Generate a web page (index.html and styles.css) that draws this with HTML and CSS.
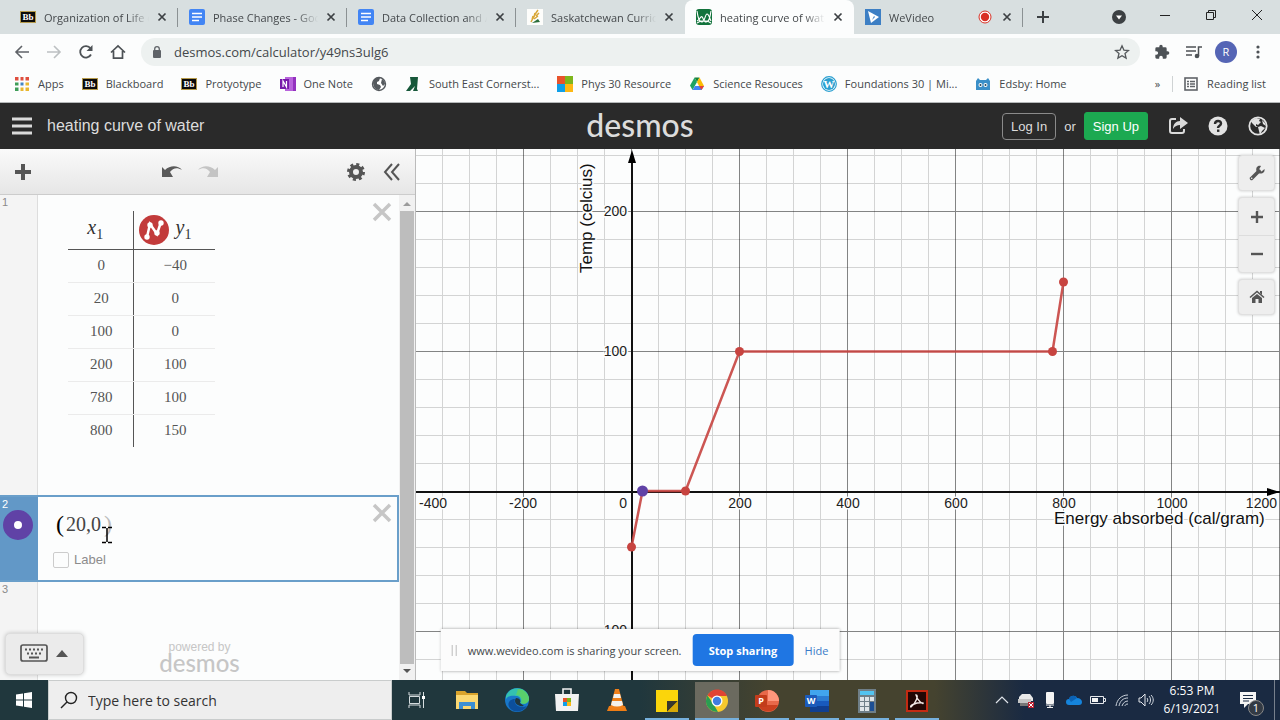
FILE: index.html
```html
<!DOCTYPE html>
<html lang="en">

<head>
    <meta charset="UTF-8">
    <meta name="viewport" content="width=device-width, initial-scale=1.0">
    <title>heating curve of water</title>
    <link rel="stylesheet" href="styles.css">
</head>

<body>
    <!-- shared icons -->
    <svg class="defs" width="0" height="0" aria-hidden="true">
        <symbol id="bb" viewBox="0 0 16 16">
            <rect x="0" y="2" width="16" height="12" fill="#b59a4a"/>
            <rect x="1" y="3" width="14" height="10" fill="#0b0b0b"/>
            <text x="8" y="11" text-anchor="middle" font-family="Liberation Serif, serif" font-size="9" font-weight="bold" fill="#fff">Bb</text>
        </symbol>
        <symbol id="docs" viewBox="0 0 16 16">
            <rect width="16" height="16" rx="2" fill="#4285f4"/>
            <path d="M3 4.500h10M3 8h10M3 11.500h7" stroke="#fff" stroke-width="1.500"/>
        </symbol>
        <symbol id="close" viewBox="0 0 16 16">
            <path d="M4.500 4.500l7 7M11.500 4.500l-7 7" stroke="#3c4043" stroke-width="1.700"/>
        </symbol>
        <symbol id="cross" viewBox="0 0 20 20">
            <path d="M2 2l16 16M18 2L2 18" stroke="#c6c6c6" stroke-width="3.500"/>
        </symbol>
    </svg>

    <div class="tabs">
        <div class="tab">
            <svg class="icon"><use href="#bb"/></svg>
            <span class="tab-title">Organization of Life on</span>
            <button class="tab-close" aria-label="Close tab"><svg class="icon"><use href="#close"/></svg></button>
        </div>
        <div class="tab">
            <svg class="icon"><use href="#docs"/></svg>
            <span class="tab-title">Phase Changes - Google</span>
            <button class="tab-close" aria-label="Close tab"><svg class="icon"><use href="#close"/></svg></button>
        </div>
        <div class="tab">
            <svg class="icon"><use href="#docs"/></svg>
            <span class="tab-title">Data Collection and An</span>
            <button class="tab-close" aria-label="Close tab"><svg class="icon"><use href="#close"/></svg></button>
        </div>
        <div class="tab no-line">
            <svg class="icon" viewBox="0 0 16 16">
                <rect width="16" height="16" fill="#fdfdfb"/>
                <path d="M4 13C6 9 8 5 11 1M5 11l1-4M7 8l1-4M7 10l4-3M9 7l3-3" stroke="#d9a838" stroke-width="1.500" fill="none"/>
                <path d="M5 14l8-1-2-3z" fill="#2a6e3a"/>
            </svg>
            <span class="tab-title">Saskatchewan Curriculum</span>
            <button class="tab-close" aria-label="Close tab"><svg class="icon"><use href="#close"/></svg></button>
        </div>
        <div class="tab active no-line">
            <svg class="icon" viewBox="0 0 16 16">
                <rect width="16" height="16" rx="3" fill="#12733c"/>
                <path d="M1 2c1 7 2 11 5 11s3-8 5-8 2 3 4 7M15 2c-1 7-2 11-5 11S7 6 5 8s-2 3-4 4M1 14c4-3 10-3 14 0" stroke="#fff" stroke-width="1.100" fill="none"/>
            </svg>
            <span class="tab-title">heating curve of water</span>
            <button class="tab-close" aria-label="Close tab"><svg class="icon"><use href="#close"/></svg></button>
        </div>
        <div class="tab">
            <svg class="icon" viewBox="0 0 16 16">
                <rect width="16" height="16" fill="#3d7fc4"/>
                <path d="M3 2l11 6-8 6z" fill="#fff"/>
                <path d="M7 11l2-4 1 1z" fill="#3d7fc4"/>
            </svg>
            <span class="tab-title">WeVideo</span>
            <svg class="icon recording" viewBox="0 0 16 16">
                <circle cx="8" cy="8" r="6" fill="#fff" stroke="#d93025"/>
                <circle cx="8" cy="8" r="4.200" fill="#d93025"/>
            </svg>
            <button class="tab-close" aria-label="Close tab"><svg class="icon"><use href="#close"/></svg></button>
        </div>
        <button class="new-tab" aria-label="New tab">
            <svg class="icon" viewBox="0 0 16 16"><path d="M8 2v12M2 8h12" stroke="#3c4043" stroke-width="2"/></svg>
        </button>
        <div class="window-buttons">
            <button aria-label="Search tabs"><svg class="icon" viewBox="0 0 16 16"><circle cx="8" cy="8" r="7" fill="#3c4043"/><path d="M5 6.500h6L8 10.500z" fill="#fff"/></svg></button>
            <button aria-label="Minimize"><svg width="12" height="12"><path d="M1 6.500h10" stroke="#222"/></svg></button>
            <button aria-label="Restore"><svg width="12" height="12"><path d="M1.500 3.500h7v7h-7zM3.500 3V1.500h7v7H9" fill="none" stroke="#222"/></svg></button>
            <button aria-label="Close"><svg width="12" height="12"><path d="M1 1l10 10M11 1L1 11" stroke="#222"/></svg></button>
        </div>
    </div>

    <div class="toolbar">
        <button class="nav-button" aria-label="Back"><svg class="icon" viewBox="0 0 16 16"><path d="M15 8H2M8 2L2 8l6 6" fill="none" stroke="#5f6368" stroke-width="1.600"/></svg></button>
        <button class="nav-button" aria-label="Forward"><svg class="icon" viewBox="0 0 16 16"><path d="M1 8h13M8 2l6 6-6 6" fill="none" stroke="#bcc0c2" stroke-width="1.600"/></svg></button>
        <button class="nav-button" aria-label="Reload"><svg class="icon" viewBox="0 0 16 16"><path d="M13 10.500A5.700 5.700 0 1 1 12.500 4.500" fill="none" stroke="#4d5256" stroke-width="1.800"/><path d="M14.500 1v6h-6z" fill="#4d5256"/></svg></button>
        <button class="nav-button" aria-label="Home"><svg class="icon" viewBox="0 0 16 16"><path d="M1 8.500L8 2l7 6.500M3.500 7v7.200h9V7" fill="none" stroke="#4d5256" stroke-width="1.700"/></svg></button>
        <div class="address">
            <svg class="icon" viewBox="0 0 16 16"><rect x="4" y="6" width="8" height="8" rx="1" fill="#5f6368"/><path d="M5.700 7V5a2.300 2.300 0 0 1 4.600 0v2" fill="none" stroke="#5f6368" stroke-width="1.300"/></svg>
            <input type="text" aria-label="Address" value="desmos.com/calculator/y49ns3ulg6">
            <svg class="icon" viewBox="0 0 16 16"><path d="M8 1.800l1.900 4.300 4.600.4-3.500 3 1.100 4.600L8 11.700l-4.100 2.400L5 9.500l-3.500-3 4.600-.4z" fill="none" stroke="#55595c" stroke-width="1.300"/></svg>
        </div>
        <button class="nav-button" aria-label="Extensions"><svg class="icon" viewBox="0 0 24 24"><path fill="#4d5256" d="M20.500 11H19V7a2 2 0 0 0-2-2h-4V3.500a2.500 2.500 0 0 0-5 0V5H4a2 2 0 0 0-2 2v3.800h1.500a2.700 2.700 0 0 1 0 5.400H2V20a2 2 0 0 0 2 2h3.800v-1.500a2.700 2.700 0 0 1 5.400 0V22H17a2 2 0 0 0 2-2v-4h1.500a2.500 2.500 0 0 0 0-5z"/></svg></button>
        <button class="nav-button" aria-label="Media"><svg class="icon" viewBox="0 0 16 16"><path d="M0 3h10M0 7h10M0 11h6M12.500 12V3H16" fill="none" stroke="#4d5256" stroke-width="1.500"/><circle cx="11" cy="12" r="2.300" fill="#4d5256"/></svg></button>
        <button class="nav-button" aria-label="Profile"><span class="avatar">R</span></button>
        <button class="nav-button" aria-label="Menu"><svg class="icon" viewBox="0 0 16 16" fill="#4d5256"><circle cx="8" cy="3" r="1.600"/><circle cx="8" cy="8" r="1.600"/><circle cx="8" cy="13" r="1.600"/></svg></button>
    </div>

    <nav class="bookmarks">
        <a href="#"><svg class="icon" viewBox="0 0 16 16">
                <path d="M1 1h4v4H1zM6 1h4v4H6zM11 1h4v4h-4z" fill="#df4f3e"/>
                <path d="M1 6h4v4H1z" fill="#3f9d58"/><path d="M6 6h4v4H6z" fill="#4285c4"/><path d="M11 6h4v4h-4z" fill="#e9b72f"/>
                <path d="M1 11h4v4H1z" fill="#3f9d58"/><path d="M11 11h4v4h-4zM6 11h4v4H6z" fill="#e9b72f"/>
                <path d="M5.500 0v16M10.500 0v16M0 5.500h16M0 10.500h16" stroke="#fcfdfd" stroke-width="2"/>
            </svg>Apps</a>
        <a href="#"><svg class="icon"><use href="#bb"/></svg>Blackboard</a>
        <a href="#"><svg class="icon"><use href="#bb"/></svg>Protyotype</a>
        <a href="#"><svg class="icon" viewBox="0 0 16 16"><rect x="5" y="1" width="11" height="14" fill="#b863dc"/><path d="M13 1h3v14h-3z" fill="#9332bf"/><rect y="3" width="9" height="10" fill="#7719aa"/><path d="M3 11V5l3.500 6V5" fill="none" stroke="#fff" stroke-width="1.200"/></svg>One Note</a>
        <a href="#" aria-label="Globe"><svg class="icon" viewBox="0 0 16 16"><circle cx="8" cy="8" r="6.500" fill="#fff" stroke="#555a5e" stroke-width="1.400"/><path d="M2 6c1-3 4-5 7-4l-1 3-2 1v2l3 1 1 2-2 3c-4 0-6-4-6-8zM11 3c2 1 3 3 3 5l-2 2-2-3z" fill="#555a5e"/></svg></a>
        <a href="#"><svg class="icon" viewBox="0 0 16 16"><path d="M5 1h8l-1 12 1 2H8l2-5-5 5H1L6 8z" fill="#17583a"/></svg>South East Cornerst...</a>
        <a href="#"><svg class="icon" viewBox="0 0 16 16"><path d="M0 0h8v8H0z" fill="#e8532b"/><path d="M8 0h8v8H8z" fill="#7db61c"/><path d="M0 8h8v8H0z" fill="#0f9fe8"/><path d="M8 8h8v8H8z" fill="#fdb813"/></svg>Phys 30 Resource</a>
        <a href="#"><svg class="icon" viewBox="0 0 16 16"><path d="M5.500 1.500h5L8 6z" fill="#188038"/><path d="M5.500 1.500L1 9.500l2.500 4.500L8 6z" fill="#1ea362"/><path d="M10.500 1.500L15 10h-5L8 6z" fill="#fbbc04"/><path d="M3.500 14L6 10h9l-2.500 4z" fill="#4285f4"/><path d="M15 10l-2.500 4-2.500-4z" fill="#ea4335"/></svg>Science Resouces</a>
        <a href="#"><svg class="icon" viewBox="0 0 16 16"><circle cx="8" cy="8" r="7.300" fill="#fff" stroke="#2a9fd0" stroke-width="1.200"/><circle cx="8" cy="8" r="6" fill="#2a9fd0"/><text x="8" y="12" text-anchor="middle" font-family="Liberation Serif, serif" font-size="11" font-weight="bold" fill="#fff">W</text></svg>Foundations 30 | Mi...</a>
        <a href="#"><svg class="icon" viewBox="0 0 16 16"><path d="M1 5l2-3 2 2h6l2-2 2 3v9H1z" fill="#3a8fc8"/><circle cx="5.500" cy="9" r="2" fill="#fff"/><circle cx="10.500" cy="9" r="2" fill="#fff"/><circle cx="5.500" cy="9" r="1" fill="#245"/><circle cx="10.500" cy="9" r="1" fill="#245"/></svg>Edsby: Home</a>
        <button class="more">»</button>
        <a class="reading" href="#"><svg class="icon" viewBox="0 0 16 16"><rect x="2" y="2" width="12" height="12" fill="none" stroke="#5f6368" stroke-width="1.600"/><path d="M4 5.500h2M4 8h2M4 10.500h2M7 5.500h5M7 8h5M7 10.500h5" stroke="#5f6368" stroke-width="1.300"/></svg>Reading list</a>
    </nav>

    <header class="header">
        <button class="menu" aria-label="Open menu"><svg width="20" height="18"><path d="M0 2h20M0 9h20M0 16h20" stroke="#dadada" stroke-width="3"/></svg></button>
        <h1>heating curve of water</h1>
        <span class="logo">desmos</span>
        <div class="account">
            <button class="login">Log In</button>
            <span>or</span>
            <button class="signup">Sign Up</button>
            <button class="header-icon" aria-label="Share"><svg width="20" height="20" viewBox="0 0 20 20"><path d="M8 3H4a2 2 0 0 0-2 2v10a2 2 0 0 0 2 2h10a2 2 0 0 0 2-2v-2" fill="none" stroke="#dadada" stroke-width="2"/><path d="M12 1l8 6-8 6V9c-3 0-5 1-7 4 0-5 3-8 7-8z" fill="#dadada"/></svg></button>
            <button class="header-icon" aria-label="Help"><svg width="20" height="20" viewBox="0 0 20 20"><circle cx="10" cy="10" r="9.500" fill="#e2e2e2"/><path d="M7 8c0-4 6-4 6-.500 0 2.500-3 2-3 4.500" fill="none" stroke="#2a2a2a" stroke-width="2.400"/><rect x="9" y="13.500" width="2.400" height="2.400" fill="#2a2a2a"/></svg></button>
            <button class="header-icon" aria-label="Language"><svg width="20" height="20" viewBox="0 0 20 20"><circle cx="10" cy="10" r="8.700" fill="none" stroke="#e2e2e2" stroke-width="1.800"/><path d="M3 5l5-3 4 1-1 2 2 1-3 3-2-1 0 2 2 1-2 0-4-4zM10 11l3-1 4 2-3 3-2 4-1-4zM14 4l3 3 1 3-3-2z" fill="#e2e2e2"/></svg></button>
        </div>
    </header>

    <main class="calculator">
        <section class="panel">
            <div class="panel-bar">
                <button aria-label="Add item"><svg width="18" height="18"><path d="M9 1v16M1 9h16" stroke="#555" stroke-width="4"/></svg></button>
                <div class="history">
                    <button aria-label="Undo"><svg width="22" height="14" viewBox="0 0 22 14"><path d="M1 2l3 3c5-5 13-5 17 0-5-3-9-2-12 2l3 5H1z" fill="#5a5a5a"/></svg></button>
                    <button aria-label="Redo"><svg width="22" height="14" viewBox="0 0 22 14"><path d="M21 2l-3 3C13 0 5 0 1 5c5-3 9-2 12 2l-3 5h11z" fill="#c4c4c4"/></svg></button>
                </div>
                <button aria-label="Edit list"><svg width="18" height="18" viewBox="0 0 18 18"><circle cx="9" cy="9" r="7.500" fill="none" stroke="#555" stroke-width="3" stroke-dasharray="3 2.890"/><circle cx="9" cy="9" r="5" fill="none" stroke="#555" stroke-width="4"/></svg></button>
                <button aria-label="Hide list"><svg width="18" height="18" viewBox="0 0 18 18"><path d="M9 1L2 9l7 8M16 1L9 9l7 8" fill="none" stroke="#555" stroke-width="2"/></svg></button>
            </div>
            <div class="panel-body">
                <div class="expressions">
                    <div class="expression first">
                        <div class="gutter">1</div>
                        <div class="content">
                            <table class="data">
                                <thead>
                                    <tr>
                                        <th><i>x</i><sub>1</sub></th>
                                        <th>
                                            <div class="y-head">
                                                <svg width="30" height="30" viewBox="0 0 30 30"><circle cx="15" cy="15" r="15" fill="#c23b3b"/><path d="M8 22l3-13 7 10 4-12" fill="none" stroke="#fff" stroke-width="2.500"/><g fill="#fff"><circle cx="8" cy="22" r="2.700"/><circle cx="11" cy="10" r="2.700"/><circle cx="18" cy="18" r="2.700"/><circle cx="22" cy="8" r="2.700"/></g></svg>
                                                <span><i>y</i><sub>1</sub></span>
                                            </div>
                                        </th>
                                    </tr>
                                </thead>
                                <tbody>
                                    <tr><td>0</td><td>−40</td></tr>
                                    <tr><td>20</td><td>0</td></tr>
                                    <tr><td>100</td><td>0</td></tr>
                                    <tr><td>200</td><td>100</td></tr>
                                    <tr><td>780</td><td>100</td></tr>
                                    <tr><td>800</td><td>150</td></tr>
                                </tbody>
                            </table>
                            <button class="remove" aria-label="Delete table"><svg width="20" height="20"><use href="#cross"/></svg></button>
                        </div>
                    </div>
                    <div class="expression selected">
                        <div class="gutter">2<span class="point-icon"></span></div>
                        <div class="content">
                            <div class="point-form">
                                <div class="math">
                                    <span class="paren">(</span><input type="text" aria-label="Point" value="20,0"><span class="paren ghost">)</span>
                                    <svg class="ibeam" width="10" height="18"><path d="M0 1.500h4M6 1.500h4M5 2v14M0 16.500h4M6 16.500h4" stroke="#000" stroke-width="1.500"/></svg>
                                </div>
                                <label class="point-label"><input type="checkbox">Label</label>
                            </div>
                            <button class="remove" aria-label="Delete point"><svg width="20" height="20"><use href="#cross"/></svg></button>
                        </div>
                    </div>
                    <div class="expression last">
                        <div class="gutter">3</div>
                        <div class="content"></div>
                    </div>
                    <button class="keypad" aria-label="Show keypad">
                        <svg width="28" height="18" viewBox="0 0 28 18"><rect x="1" y="1" width="26" height="16" rx="2" fill="none" stroke="#555" stroke-width="1.700"/><path d="M5 5.500h19M7 9.500h16" stroke="#555" stroke-width="2" stroke-dasharray="2 2"/><path d="M9 13.500h10" stroke="#555" stroke-width="2"/></svg>
                        <svg width="12" height="7"><path d="M0 7l6-7 6 7z" fill="#555"/></svg>
                    </button>
                    <div class="powered">powered by<span>desmos</span></div>
                </div>
                <div class="scrollbar">
                    <svg width="16" height="16"><path d="M4 11l4-4 4 4z" fill="#9b9b9b"/></svg>
                    <div class="thumb"></div>
                    <svg width="16" height="16"><path d="M4 5l4 4 4-4z" fill="#555"/></svg>
                </div>
            </div>
        </section>

        <section class="graph">
            <svg class="plot" width="100%" height="100%">
                <defs>
                    <!-- one tile = 200 units across, 100 units up -->
                    <pattern id="grid" x="107" y="62" width="108" height="140" patternUnits="userSpaceOnUse">
                        <path d="M27 0h1v140h-1zM54 0h1v140h-1zM81 0h1v140h-1zM0 28h108v1H0zM0 56h108v1H0zM0 84h108v1H0zM0 112h108v1H0z" fill="#000" fill-opacity=".16"/>
                        <path d="M0 0h1v140H0zM0 0h108v1H0z" fill="#000" fill-opacity=".48"/>
                    </pattern>
                </defs>
                <rect width="100%" height="100%" fill="url(#grid)"/>
                <rect x="215" y="4" width="2" height="100%" fill="#111"/>
                <path d="M216 1l-4 13h8z" fill="#000"/>
                <rect x="0" y="342" width="100%" height="2" fill="#111"/>
                <svg x="100%" y="343" overflow="visible"><path d="M0 0l-13-4v8z" fill="#000"/></svg>

                <g class="tick">
                    <text x="211" y="67" text-anchor="end">200</text>
                    <text x="211" y="207" text-anchor="end">100</text>
                    <text x="211" y="486" text-anchor="end">-100</text>
                    <text x="211" y="359" text-anchor="end">0</text>
                    <text x="3" y="359">-400</text>
                    <text x="107" y="359" text-anchor="middle">-200</text>
                    <text x="324" y="359" text-anchor="middle">200</text>
                    <text x="432" y="359" text-anchor="middle">400</text>
                    <text x="540" y="359" text-anchor="middle">600</text>
                    <text x="648" y="359" text-anchor="middle">800</text>
                    <text x="756" y="359" text-anchor="middle">1000</text>
                    <text x="861" y="359" text-anchor="end">1200</text>
                </g>
                <g class="axis-name">
                    <text x="638" y="375">Energy absorbed (cal/gram)</text>
                    <text transform="translate(176 124) rotate(-90)">Temp (celcius)</text>
                </g>

                <polyline points="215.500,398 226.500,342 269.500,342 323.500,202.500 636.500,202.500 647.500,133" fill="none" stroke="#c74440" stroke-opacity=".9" stroke-width="2.500"/>
                <g fill="#c74440">
                    <circle cx="215.500" cy="398" r="4.500"/>
                    <circle cx="269.500" cy="342" r="4.500"/>
                    <circle cx="323.500" cy="202.500" r="4.500"/>
                    <circle cx="636.500" cy="202.500" r="4.500"/>
                    <circle cx="647.500" cy="133" r="4.500"/>
                </g>
                <circle cx="226.500" cy="342" r="5.500" fill="#6042a6"/>
            </svg>
            <div class="graph-buttons">
                <button aria-label="Graph settings"><svg class="icon" viewBox="0 0 16 16"><path d="M2.500 13.500L10 6" stroke="#555" stroke-width="3.500" stroke-linecap="round"/><path d="M15.500 4l-3 2.500-2.500-2L12 1C8.500 0 6.500 3 7.500 6l3 2.500C14 9 16 7 15.500 4z" fill="#555"/><circle cx="2.700" cy="13.300" r=".8" fill="#eee"/></svg></button>
                <div class="zoom">
                    <button aria-label="Zoom in"><svg width="12" height="12"><path d="M6 0v12M0 6h12" stroke="#555" stroke-width="2.400"/></svg></button>
                    <button aria-label="Zoom out"><svg width="12" height="12"><path d="M0 6h12" stroke="#555" stroke-width="2.400"/></svg></button>
                </div>
                <button aria-label="Default view"><svg class="icon" viewBox="0 0 16 16"><path d="M1 8.500l7-6 7 6" fill="none" stroke="#555" stroke-width="1.600"/><path d="M3 9l5-4 5 4v5H9.500v-4h-3v4H3zM11 2h2v4l-2-2z" fill="#555"/></svg></button>
            </div>
        </section>

        <!-- screen sharing notice, centred on the window -->
        <div class="sharing">
            <span class="grip"></span>
            <span>www.wevideo.com is sharing your screen.</span>
            <button class="stop">Stop sharing</button>
            <button class="hide">Hide</button>
        </div>
    </main>

    <footer class="taskbar">
        <button class="start" aria-label="Start"><svg class="icon" viewBox="0 0 16 16"><path d="M0 2.500L7 1.500v6H0zM8 1.300L16 0v7.500H8zM0 8.500h7v6l-7-1zM8 8.500h8V16l-8-1.300z" fill="#fff"/></svg></button>
        <label class="search">
            <svg width="18" height="18"><circle cx="11" cy="7" r="5.500" fill="none" stroke="#222" stroke-width="1.400"/><path d="M7 11l-6 6" stroke="#222" stroke-width="1.400"/></svg>
            <input type="text" placeholder="Type here to search" aria-label="Search">
        </label>
        <div class="apps">
            <button aria-label="Task view"><svg width="18" height="18" viewBox="0 0 18 18"><path d="M1 1v3h11V1M1 17v-3h11v3M1.500 5.500h10v7h-10zM15.500 1v16" fill="none" stroke="#d5dcde"/><path d="M14 5h3v3h-3z" fill="#fff"/></svg></button>
            <button aria-label="File Explorer"><svg width="24" height="24" viewBox="0 0 24 24"><path d="M1 3h9l2 2h11v5H1z" fill="#d9a32c"/><path d="M1 7h22v14H1z" fill="#fbd872"/><path d="M4 21v-7h16v7h-4v-3H8v3z" fill="#3c8fd3"/></svg></button>
            <button aria-label="Edge"><svg width="24" height="24" viewBox="0 0 24 24"><circle cx="12" cy="12" r="12" fill="#1877c9"/><path d="M1 8C5-3 22-2 24 10c0 6-6 7-9 5 2-3 0-7-4-7-4-1-8 0-10 3z" fill="#34c1b0"/><path d="M13 1c6 0 11 5 11 10 0 4-5 6-8 4 2-5-1-8-5-8z" fill="#59cf6c"/><path d="M10 11c-2 5 4 10 12 7-3 5-10 7-15 4-6-4-4-11 3-11z" fill="#0c4f9c"/><path d="M11 10c-3 4 1 9 8 8l-4-3c1-2 0-5-4-5z" fill="#203740"/></svg></button>
            <button aria-label="Store"><svg width="24" height="24" viewBox="0 0 24 24"><path d="M8 6V1h8v5" fill="none" stroke="#f2f2f2" stroke-width="1.600"/><path d="M0 6h24l-1 17H1z" fill="#f2f2f2"/><path d="M8 10h4v4H8z" fill="#e8532b"/><path d="M12 10h4v4h-4z" fill="#7db61c"/><path d="M8 14h4v4H8z" fill="#0f9fe8"/><path d="M12 14h4v4h-4z" fill="#fdb813"/></svg></button>
            <button aria-label="VLC"><svg width="24" height="24" viewBox="0 0 24 24"><path d="M4 18h16l2 5H2z" fill="#ee7d15"/><path d="M10 1h4l5 19c-4 2-10 2-14 0z" fill="#f08019"/><path d="M9 6h6l1 4H8zM7 13h10l1 4c-4 2-8 2-12 0z" fill="#f4f1ec"/></svg></button>
            <button class="open" aria-label="Sticky Notes"><svg width="24" height="24" viewBox="0 0 24 24"><path d="M1 1h22v22H1z" fill="#fbd50b"/><path d="M12 23V12h11z" fill="#39382c"/><path d="M12 23l11-11v11z" fill="#d8a906"/></svg></button>
            <button class="open current" aria-label="Chrome"><svg width="24" height="24" viewBox="0 0 24 24"><circle cx="12" cy="12" r="11" fill="#f6c92d"/><path d="M12 12L2.500 6.500C7-2 19-1 22 7H12z" fill="#e04434"/><path d="M2.500 6.500L9 16l4 7C4 23-2 15 2.500 6.500z" fill="#2a9d52"/><circle cx="12" cy="12" r="5.500" fill="#fff"/><circle cx="12" cy="12" r="4.200" fill="#3f7de0"/></svg></button>
            <button class="open" aria-label="PowerPoint"><svg width="24" height="24" viewBox="0 0 24 24"><circle cx="13" cy="12" r="11" fill="#e8694a"/><path d="M13 1a11 11 0 0 1 11 11H13z" fill="#ff977c"/><path d="M3 16a11 11 0 0 0 20 0z" fill="#c9401f"/><rect y="6" width="12" height="12" rx="1" fill="#c23c1b"/><text x="6" y="15" text-anchor="middle" font-family="Open Sans, sans-serif" font-size="9" font-weight="bold" fill="#fff">P</text></svg></button>
            <button class="open" aria-label="Word"><svg width="24" height="24" viewBox="0 0 24 24"><path d="M5 1h19v6H5z" fill="#41a5ee"/><path d="M5 7h19v5H5z" fill="#2b7cd3"/><path d="M5 12h19v5H5z" fill="#185abd"/><path d="M5 17h19v6H5z" fill="#103f91"/><rect y="6" width="12" height="12" rx="1" fill="#1c5bbb"/><text x="6" y="15" text-anchor="middle" font-family="Open Sans, sans-serif" font-size="9" font-weight="bold" fill="#fff">W</text></svg></button>
            <button class="open" aria-label="Calculator"><svg width="24" height="24" viewBox="0 0 24 24"><path d="M3 0h18v24H3z" fill="#6f7f88"/><path d="M5 2h14v4H5z" fill="#53c4f0"/><path d="M5 8h4v4H5zM10 8h4v4h-4zM15 8h4v4h-4zM5 13h4v4H5zM10 13h4v4h-4zM5 18h4v4H5zM10 18h4v4h-4z" fill="#dfe5e8"/><path d="M15 13h4v9h-4z" fill="#1d4f94"/></svg></button>
            <button class="open" aria-label="Acrobat"><svg width="24" height="24" viewBox="0 0 24 24"><rect x="2" y="2" width="20" height="20" fill="#220705" stroke="#c32a12" stroke-width="2"/><path d="M11 6c3 0 0 8-5 12-2-1 5-5 12-4 1 2-6-2-7-8z" fill="none" stroke="#f3e9e7" stroke-width="1.400"/></svg></button>
        </div>
        <div class="tray">
            <button aria-label="Hidden icons"><svg width="14" height="10"><path d="M1 8l6-6 6 6" fill="none" stroke="#e0e4ea" stroke-width="1.200"/></svg></button>
            <button aria-label="Printer"><svg class="icon" viewBox="0 0 16 16"><path d="M1 5l3-3h8l3 4v3H1z" fill="#e8e8e8"/><path d="M0 7h13v4H0z" fill="#c4c4c4"/><path d="M2 11h10v3H2z" fill="#777"/><path d="M10 10h6v6h-6z" fill="#bd2433"/><path d="M11 11l4 4M15 11l-4 4" stroke="#fff"/></svg></button>
            <button aria-label="Microphone"><svg class="icon" viewBox="0 0 16 16"><rect x="4" y="0" width="8" height="12" rx="1" fill="#f4f4f4"/><path d="M4 13h8M8 13v2M5 15.500h6" stroke="#f4f4f4" stroke-width="1.200"/></svg></button>
            <button aria-label="OneDrive"><svg class="icon" viewBox="0 0 16 16"><path d="M3 13a3 3 0 0 1 0-6c1-4 7-4 8-1 3 0 5 2 5 4s-1 3-3 3z" fill="#1584dc"/><path d="M3 7c1-4 7-4 8-1L5 10z" fill="#0b62b4"/></svg></button>
            <button aria-label="Battery"><svg class="icon" viewBox="0 0 16 16"><path d="M.5 4.500h13v7H.5zM13.500 6.500h2v3h-2" fill="none" stroke="#e4e7ec"/><path d="M2 6h6v4H2z" fill="#f4f4f4"/></svg></button>
            <button aria-label="Network"><svg class="icon" viewBox="0 0 16 16"><path d="M2 14C3 7 8 3 14 3M5 14c1-5 4-8 9-8M8 14c1-3 3-5 6-5M11 14c0-1 1-2 3-2" fill="none" stroke="#ccd3dc"/></svg></button>
            <button aria-label="Volume"><svg class="icon" viewBox="0 0 16 16"><path d="M1 6h2l4-4v12l-4-4H1z" fill="none" stroke="#e4e7ec"/><path d="M9 6c1 1 1 3 0 4M11 4c2 2 2 6 0 8M13 3c3 3 3 7 0 10" fill="none" stroke="#cfd5dd"/></svg></button>
            <div class="clock"><span>6:53 PM</span><span>6/19/2021</span></div>
            <button class="notifications" aria-label="Notifications"><svg width="18" height="18" viewBox="0 0 18 18"><path d="M1 1h16v12H9l-4 4v-4H1z" fill="#f4f4f4"/><path d="M4 4.500h10M4 7.500h10M4 10h6" stroke="#1a2a42"/></svg><span class="badge">1</span></button>
            <span class="peek"></span>
        </div>
    </footer>
</body>

</html>
```
FILE: styles.css
```css
* {
    box-sizing: border-box;
}

body {
    margin: 0;
    height: 100vh;
    display: flex;
    flex-direction: column;
    overflow: hidden;
    font-family: "Open Sans", "Noto Sans", sans-serif;
    font-size: 11px;
    color: #44484b;
    background-color: #fcfdfd;
}

button {
    display: flex;
    align-items: center;
    justify-content: center;
    padding: 0;
    border: none;
    background: none;
    font: inherit;
    color: inherit;
    cursor: pointer;
}

input {
    border: none;
    outline: none;
    background: none;
    padding: 0;
    font: inherit;
    color: inherit;
}

svg {
    flex-shrink: 0;
}

.defs {
    position: absolute;
}

.icon {
    width: 16px;
    height: 16px;
}

/* browser tabs */
.tabs {
    display: flex;
    height: 34px;
    flex-shrink: 0;
    padding-left: 9px;
    background-color: #d8dfe0;
}

.tab {
    display: flex;
    align-items: center;
    flex: 0 1 169px;
    min-width: 0;
    padding: 0 8px 0 11px;
    position: relative;
}

.tab::after {
    content: "";
    position: absolute;
    right: 0;
    top: 8px;
    height: 19px;
    border-right: 1px solid #8b9193;
}

.tab.no-line::after {
    display: none;
}

.tab.active {
    background-color: #fcfdfd;
    border-radius: 8px 8px 0 0;
}

.tab-title {
    flex: 1;
    margin: 0 5px 0 8px;
    overflow: hidden;
    white-space: nowrap;
    mask-image: linear-gradient(to right, #000 80%, transparent);
}

.recording {
    margin-right: 6px;
}

.new-tab {
    width: 40px;
}

.window-buttons {
    display: flex;
    margin-left: auto;
    padding-bottom: 5px;
}

.window-buttons button {
    width: 46px;
}

.window-buttons button:first-child {
    padding-top: 5px;
}

/* address bar */
.toolbar {
    display: flex;
    align-items: center;
    height: 36px;
    flex-shrink: 0;
    padding: 0 6px;
}

.nav-button {
    width: 32px;
    height: 32px;
}

.address {
    flex: 1;
    display: flex;
    align-items: center;
    height: 28px;
    margin: 0 6px 0 7px;
    padding: 0 10px 0 8px;
    border-radius: 14px;
    background-color: #edf1f0;
}

.address input {
    flex: 1;
    margin-left: 9px;
    font-size: 13px;
}

.avatar {
    width: 22px;
    height: 22px;
    border-radius: 50%;
    background-color: #5565b5;
    color: white;
    line-height: 22px;
}

.bookmarks {
    display: flex;
    align-items: center;
    gap: 18px;
    height: 33px;
    flex-shrink: 0;
    padding: 0 14px 5px;
    border-bottom: 1px solid #b5b8b9;
}

.bookmarks a {
    display: flex;
    align-items: center;
    gap: 8px;
    color: inherit;
    text-decoration: none;
    white-space: nowrap;
}

.bookmarks .more {
    margin-left: auto;
}

.bookmarks .reading {
    margin-left: -6px;
    padding-left: 10px;
    border-left: 1px solid #cfd3d4;
}

/* calculator header */
.header {
    display: flex;
    align-items: center;
    justify-content: space-between;
    position: relative;
    height: 46px;
    flex-shrink: 0;
    padding: 0 12px;
    background-color: #2a2a2a;
    color: #dcdcdc;
    font-family: "Liberation Sans", Arial, sans-serif;
    font-size: 13px;
}

.header h1 {
    margin: 0 auto 0 15px;
    font-size: 16px;
    line-height: 20px;
    font-weight: normal;
}

.logo {
    position: absolute;
    left: 50%;
    transform: translateX(-50%);
    font-family: Lato, sans-serif;
    font-size: 32px;
    font-weight: 500;
    line-height: 40px;
    top: 2px;
}

.account {
    display: flex;
    align-items: center;
    gap: 8px;
}

.login,
.signup {
    height: 27px;
    padding: 0 8px;
    border: 1px solid #8a8a8a;
    border-radius: 4px;
}

.signup {
    height: 28px;
    border-color: #1ca951;
    border-radius: 3px;
    background-color: #1ca951;
    color: white;
}

.header-icon {
    width: 20px;
    margin-left: 12px;
}

/* expression list */
.calculator {
    flex: 1;
    min-height: 0;
    display: flex;
    position: relative;
    font-family: "Liberation Sans", Arial, sans-serif;
}

.panel {
    width: 416px;
    flex-shrink: 0;
    display: flex;
    flex-direction: column;
    border-right: 1px solid #bbb;
}

.panel-bar {
    display: flex;
    align-items: center;
    gap: 18px;
    height: 46px;
    flex-shrink: 0;
    padding: 0 14px;
    border-bottom: 1px solid #ccc;
    background: linear-gradient(#fafafa, #e6e6e6);
}

.history {
    flex: 1;
    display: flex;
    justify-content: center;
    gap: 14px;
}

.panel-body {
    flex: 1;
    min-height: 0;
    display: flex;
}

.expressions {
    flex: 1;
    display: flex;
    flex-direction: column;
    position: relative;
    overflow: hidden;
}

.expression {
    display: flex;
}

.first {
    height: 300px;
}

.last {
    flex: 1;
}

.gutter {
    width: 38px;
    padding: 1px 2px;
    border-right: 1px solid #ddd;
    background-color: #f4f4f4;
    color: #8a8a8a;
    font-size: 11px;
}

.content {
    flex: 1;
    display: flex;
    justify-content: space-between;
    align-items: flex-start;
    padding: 7px 7px 0 30px;
}

.remove {
    width: 20px;
    height: 20px;
}

.data {
    width: 147px;
    margin-top: 9px;
    border-collapse: collapse;
    font-family: "Liberation Serif", "Times New Roman", serif;
    font-size: 15px;
    color: #555;
}

.data th {
    width: 82px;
    height: 38px;
    padding: 0;
    border-bottom: 1px solid #555;
    font-size: 20px;
    line-height: 20px;
    font-weight: normal;
    color: #333;
}

.data th:first-child {
    width: 65px;
    padding-right: 10px;
}

.data td {
    height: 33px;
    padding: 0 0 0 2px;
    border-bottom: 1px solid #ebebeb;
    text-align: center;
}

.data tr > :first-child {
    border-right: 1px solid #555;
}

.data tr:last-child td {
    border-bottom: none;
}

.data sub {
    font-size: 14px;
    line-height: 14px;
}

.y-head {
    display: flex;
    align-items: center;
    gap: 7px;
    padding-left: 5px;
}

.selected {
    height: 87px;
    border: 2px solid #6a9fca;
    border-left: none;
}

.selected .gutter {
    background-color: #6298c7;
    border-right-color: #6298c7;
    color: white;
}

.selected .content {
    padding: 6px 5px 0 15px;
}

.point-icon {
    display: block;
    width: 30px;
    height: 30px;
    margin: 0 1px;
    border: 11px solid #6042a6;
    border-radius: 50%;
    background-color: white;
}

.math {
    display: flex;
    align-items: center;
    height: 42px;
    position: relative;
    padding-left: 3px;
    font-family: "Liberation Serif", "Times New Roman", serif;
    font-size: 20px;
    color: #444;
}

.math input {
    width: 38px;
    margin-left: 2px;
}

.paren {
    font-size: 24px;
    line-height: 24px;
    color: #000;
}

.paren.ghost {
    color: #bbb;
}

.ibeam {
    position: absolute;
    left: 49px;
    top: 23px;
}

.point-label {
    display: flex;
    align-items: center;
    gap: 5px;
    margin-top: 7px;
    font-size: 13px;
    line-height: 16px;
    color: #8c8c8c;
}

.point-label input {
    appearance: none;
    width: 16px;
    height: 16px;
    margin: 0;
    border: 1px solid #ccc;
    border-radius: 2px;
}

.keypad {
    position: absolute;
    left: 5px;
    bottom: 5px;
    width: 79px;
    height: 42px;
    gap: 8px;
    padding: 0 2px 2px 0;
    border: 1px solid #ddd;
    border-radius: 5px;
    background-color: #ebebeb;
    box-shadow: 0 0 4px rgba(0, 0, 0, 0.2);
}

.powered {
    position: absolute;
    left: 50%;
    bottom: 8px;
    transform: translateX(-50%);
    text-align: center;
    font-size: 12px;
    line-height: 14px;
    color: #c6c6c6;
}

.powered span {
    display: block;
    font-family: Lato, sans-serif;
    font-size: 24px;
    font-weight: 500;
    line-height: 18px;
}

.scrollbar {
    display: flex;
    flex-direction: column;
    width: 16px;
    background-color: #f1f1f1;
}

.thumb {
    flex: 1;
    margin: 0 1px;
    background-color: #bdbdbd;
}

/* graph paper */
.graph {
    flex: 1;
    min-width: 0;
    position: relative;
}

.plot {
    display: block;
}

.tick,
.axis-name {
    font-size: 14px;
    fill: #222;
    stroke: #fcfdfd;
    stroke-width: 3px;
    paint-order: stroke;
}

.axis-name {
    font-size: 17px;
    fill: #111;
}

.graph-buttons {
    position: absolute;
    right: 5px;
    top: 6px;
    display: flex;
    flex-direction: column;
    gap: 6px;
}

.graph-buttons > * {
    border: 1px solid #e0e0e0;
    border-radius: 4px;
    background-color: #eee;
    box-shadow: 0 0 3px rgba(0, 0, 0, 0.2);
}

.graph-buttons button {
    width: 37px;
    height: 36px;
}

.zoom button {
    width: 35px;
    height: 37px;
}

.zoom button + button {
    border-top: 1px solid #ddd;
}

.sharing {
    position: absolute;
    left: 50%;
    bottom: 9px;
    transform: translateX(-50%);
    display: flex;
    align-items: center;
    gap: 11px;
    height: 42px;
    padding: 0 11px;
    background-color: #fcfcfc;
    box-shadow: 0 0 3px rgba(0, 0, 0, 0.4);
    font-family: "Open Sans", "Noto Sans", sans-serif;
    white-space: nowrap;
}

.grip {
    width: 5px;
    height: 11px;
    border: solid #bbb;
    border-width: 0 1px;
}

.stop {
    width: 101px;
    height: 32px;
    border-radius: 4px;
    background-color: #1f76e3;
    color: white;
    font-weight: 700;
}

.hide {
    color: #3a7bc8;
}

/* taskbar */
.taskbar {
    display: flex;
    height: 40px;
    flex-shrink: 0;
    background: linear-gradient(to right, #20373d 0%, #20373d 50%, #45432f 60%, #45432f 73%, #1a2a42 80%, #1a2a42 100%);
    color: white;
}

.start {
    width: 48px;
}

.search {
    flex: 0 1 344px;
    display: flex;
    align-items: center;
    gap: 10px;
    padding: 0 11px;
    border: 1px solid #c9cccc;
    background-color: #eee;
    color: #333;
}

.search input {
    flex: 1;
    min-width: 0;
    font-size: 14px;
}

.search input::placeholder {
    color: #333;
}

.apps {
    display: flex;
}

.apps button {
    width: 50px;
}

.apps .open {
    border: solid transparent;
    border-width: 2px 3px 0;
    background: linear-gradient(#76b0dc, #76b0dc) bottom / 100% 2px no-repeat padding-box;
}

.apps .current {
    background-color: #6b6a5f;
}

.tray {
    display: flex;
    margin-left: auto;
}

.tray button {
    width: 24px;
}

.clock {
    display: flex;
    flex-direction: column;
    align-items: center;
    justify-content: center;
    width: 68px;
    font-size: 12px;
    line-height: 18px;
}

.tray .notifications {
    width: 44px;
    position: relative;
}

.badge {
    position: absolute;
    right: 6px;
    bottom: 4px;
    width: 16px;
    height: 16px;
    border: 1px solid #888;
    border-radius: 50%;
    background-color: #333a44;
    line-height: 14px;
}

.peek {
    width: 6px;
    margin-left: 4px;
    border-left: 1px solid #77808c;
}
```
